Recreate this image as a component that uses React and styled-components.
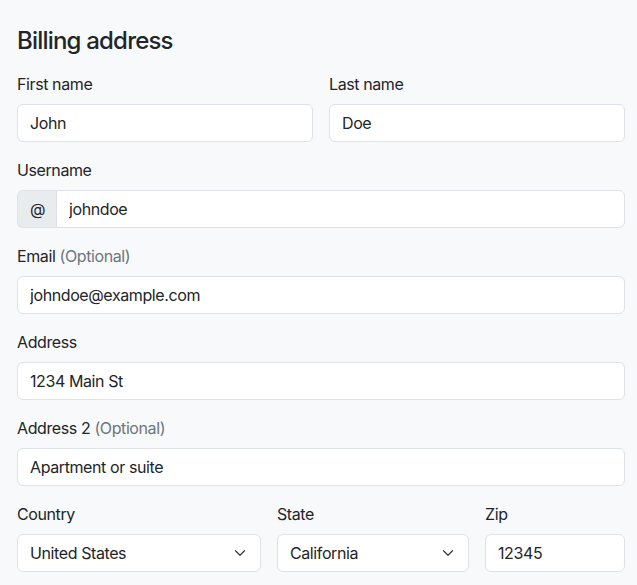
import { createGlobalStyle, styled } from 'styled-components';

const GlobalStyle = createGlobalStyle`
  body {
    margin: 0;
    background-color: #f8f9fa;
    font-family: Inter, 'Noto Sans', 'Liberation Sans', sans-serif;
    letter-spacing: -0.4px;
    color: #212529;
  }
`;

const Chevron = () => (
  <svg width="16" height="12" viewBox="0 0 16 16" fill="none">
    <path
      d="m2 5 6 6 6-6"
      stroke="#343a40"
      strokeWidth="1.6"
      strokeLinecap="round"
      strokeLinejoin="round"
    />
  </svg>
);

const App = () => {
  return (
    <>
      <GlobalStyle />
      <Page>
        <Heading>Billing address</Heading>
        <Form>
          <Field $span={6}>
            <Label>First name</Label>
            <Input defaultValue="John" />
          </Field>
          <Field $span={6}>
            <Label>Last name</Label>
            <Input defaultValue="Doe" />
          </Field>

          <Field $span={12}>
            <Label>Username</Label>
            <InputGroup>
              <Addon>@</Addon>
              <Input defaultValue="johndoe" $grouped />
            </InputGroup>
          </Field>

          <Field $span={12}>
            <Label>
              Email <Muted>(Optional)</Muted>
            </Label>
            <Input defaultValue="johndoe@example.com" />
          </Field>

          <Field $span={12}>
            <Label>Address</Label>
            <Input defaultValue="1234 Main St" />
          </Field>

          <Field $span={12}>
            <Label>
              Address 2 <Muted>(Optional)</Muted>
            </Label>
            <Input defaultValue="Apartment or suite" />
          </Field>

          <Field $span={5}>
            <Label>Country</Label>
            <Select>
              <span>United States</span>
              <Chevron />
            </Select>
          </Field>
          <Field $span={4}>
            <Label>State</Label>
            <Select>
              <span>California</span>
              <Chevron />
            </Select>
          </Field>
          <Field $span={3}>
            <Label>Zip</Label>
            <Input defaultValue="12345" />
          </Field>
        </Form>
      </Page>
    </>
  );
};

export default App;

const Page = styled.div`
  padding: 27px 12px 0 17px;
`;

const Heading = styled.h4`
  margin: 0 0 16px;
  font-size: 24px;
  font-weight: 500;
  line-height: 1.2;
  letter-spacing: -0.8px;
`;

const Form = styled.div`
  display: grid;
  grid-template-columns: repeat(12, 1fr);
  column-gap: 16px;
  row-gap: 16px;
`;

const Field = styled.div`
  grid-column: span ${props => props.$span};
  min-width: 0;
`;

const Label = styled.label`
  display: block;
  margin-bottom: 8px;
  font-size: 16px;
  line-height: 24px;
`;

const Muted = styled.span`
  color: #6c757d;
`;

const Input = styled.input`
  display: block;
  box-sizing: border-box;
  width: 100%;
  height: 38px;
  padding: 6px 12px;
  font-family: inherit;
  font-size: 16px;
  line-height: 24px;
  letter-spacing: inherit;
  color: #212529;
  background-color: #fff;
  border: 1px solid #dee2e6;
  border-radius: ${props => (props.$grouped ? '0 6px 6px 0' : '6px')};
  outline: none;
`;

const InputGroup = styled.div`
  display: flex;
  align-items: stretch;
`;

const Addon = styled.span`
  display: flex;
  align-items: center;
  box-sizing: border-box;
  width: 39px;
  padding: 0 12px;
  font-size: 16px;
  color: #212529;
  background-color: #e9ecef;
  border: 1px solid #dee2e6;
  border-right: 0;
  border-radius: 6px 0 0 6px;
`;

const Select = styled.div`
  display: flex;
  align-items: center;
  justify-content: space-between;
  box-sizing: border-box;
  height: 38px;
  padding: 6px 12px;
  font-size: 16px;
  line-height: 24px;
  background-color: #fff;
  border: 1px solid #dee2e6;
  border-radius: 6px;
`;
